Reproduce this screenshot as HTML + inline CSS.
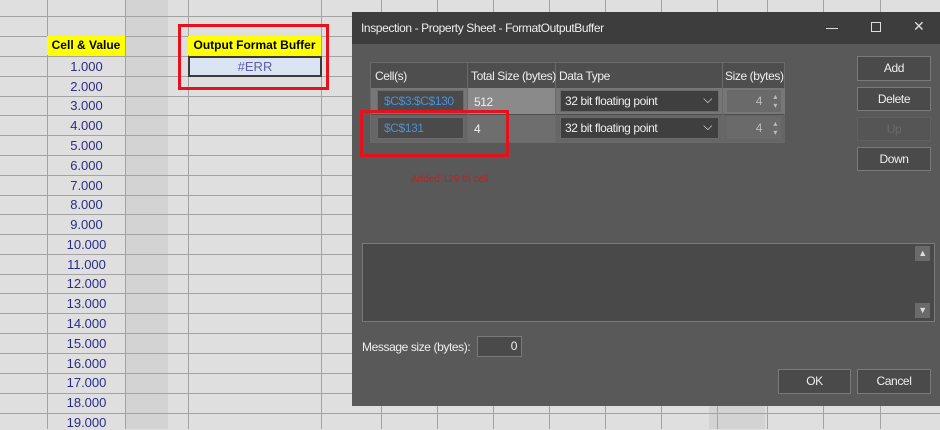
<!DOCTYPE html>
<html><head><style>
*{margin:0;padding:0;box-sizing:border-box}
body{width:940px;height:429px;overflow:hidden;position:relative;background:#dfdfdf;font-family:"Liberation Sans",sans-serif}
.a{position:absolute}
.v{position:absolute;top:0;width:1px;height:429px;background:#a3a3a3}
.h{position:absolute;left:0;width:940px;height:1px;background:#a3a3a3}
.num{position:absolute;left:48px;width:77px;text-align:center;color:#2b2b8c;font-size:13px}
.dlg{position:absolute;left:352px;top:12px;width:588px;height:394px;background:#595959;font-family:"Liberation Sans",sans-serif;color:#eee;font-size:12px;letter-spacing:-0.4px}
.btn{position:absolute;border:1px solid #7a7a7a;background:#4a4a4a;text-align:center;color:#eee;font-size:12px}
.cell{position:absolute;border:1px solid #6a6a6a}
</style></head><body>
<div class="a" style="left:125px;top:0;width:43px;height:429px;background:#d3d3d3"></div>
<div class="a" style="left:709px;top:400px;width:56px;height:29px;background:#d3d3d3"></div>
<div class="h" style="top:16px"></div><div class="h" style="top:36px"></div><div class="h" style="top:56px"></div><div class="h" style="top:76px"></div><div class="h" style="top:96px"></div><div class="h" style="top:115px"></div><div class="h" style="top:135px"></div><div class="h" style="top:155px"></div><div class="h" style="top:175px"></div><div class="h" style="top:195px"></div><div class="h" style="top:214px"></div><div class="h" style="top:234px"></div><div class="h" style="top:254px"></div><div class="h" style="top:274px"></div><div class="h" style="top:293px"></div><div class="h" style="top:313px"></div><div class="h" style="top:333px"></div><div class="h" style="top:353px"></div><div class="h" style="top:373px"></div><div class="h" style="top:393px"></div><div class="h" style="top:413px"></div>
<div class="v" style="left:47px"></div><div class="v" style="left:125px"></div><div class="v" style="left:188px"></div><div class="v" style="left:321px"></div><div class="v" style="left:381px"></div><div class="v" style="left:437px"></div><div class="v" style="left:493px"></div><div class="v" style="left:549px"></div><div class="v" style="left:605px"></div><div class="v" style="left:661px"></div><div class="v" style="left:717px"></div><div class="v" style="left:767px"></div><div class="v" style="left:823px"></div><div class="v" style="left:880px"></div>
<div class="a" style="left:47px;top:36px;width:78px;height:19px;background:#ffff00;font-weight:bold;font-size:12px;text-align:center;line-height:19px">Cell &amp; Value</div>
<div class="a" style="left:188px;top:36px;width:133px;height:19px;background:#ffff00;font-weight:bold;font-size:12px;text-align:center;line-height:19px">Output Format Buffer</div>
<div class="a" style="left:188px;top:56px;width:134px;height:21px;background:#dae4f2;border:2px solid #3a3a3a;color:#6060a8;font-size:13px;text-align:center;line-height:17px">#ERR</div>
<div class="a" style="left:178px;top:24px;width:151px;height:66px;border:3px solid #e8101c"></div>
<div class="num" style="top:59px">1.000</div><div class="num" style="top:79px">2.000</div><div class="num" style="top:98px">3.000</div><div class="num" style="top:118px">4.000</div><div class="num" style="top:138px">5.000</div><div class="num" style="top:158px">6.000</div><div class="num" style="top:178px">7.000</div><div class="num" style="top:197px">8.000</div><div class="num" style="top:217px">9.000</div><div class="num" style="top:237px">10.000</div><div class="num" style="top:257px">11.000</div><div class="num" style="top:276px">12.000</div><div class="num" style="top:296px">13.000</div><div class="num" style="top:316px">14.000</div><div class="num" style="top:336px">15.000</div><div class="num" style="top:356px">16.000</div><div class="num" style="top:375px">17.000</div><div class="num" style="top:395px">18.000</div><div class="num" style="top:415px">19.000</div>

<div class="dlg">
 <div class="a" style="left:0;top:0;width:588px;height:32px;background:#3d3d3d"></div>
 <div class="a" style="left:9px;top:9px;font-size:12px">Inspection - Property Sheet - FormatOutputBuffer</div>
 <div class="a" style="left:474px;top:16px;width:12px;height:1px;background:#ddd"></div>
 <div class="a" style="left:519px;top:10px;width:10px;height:10px;border:1px solid #ddd"></div>
 <div class="a" style="left:561px;top:6px;font-size:14px;color:#ddd">✕</div>
 <div class="a" style="left:18px;top:50px;width:415px;height:81px;background:#4e4e4e;border:1px solid #6a6a6a"></div>
 <div class="a" style="left:19px;top:76px;width:97px;height:26px;background:#777"></div>
 <div class="a" style="left:116px;top:76px;width:88px;height:26px;background:#8a8a8a"></div>
 <div class="a" style="left:204px;top:76px;width:167px;height:26px;background:#777"></div>
 <div class="a" style="left:371px;top:76px;width:62px;height:26px;background:#777"></div>
 <div class="a" style="left:19px;top:103px;width:97px;height:27px;background:#666"></div>
 <div class="a" style="left:116px;top:103px;width:88px;height:27px;background:#6e6e6e"></div>
 <div class="a" style="left:204px;top:103px;width:167px;height:27px;background:#666"></div>
 <div class="a" style="left:371px;top:103px;width:62px;height:27px;background:#666"></div>
 <div class="a" style="left:115px;top:50px;width:1px;height:81px;background:#6a6a6a"></div>
 <div class="a" style="left:203px;top:50px;width:1px;height:81px;background:#6a6a6a"></div>
 <div class="a" style="left:370px;top:50px;width:1px;height:81px;background:#6a6a6a"></div>
 <div class="a" style="left:23px;top:57px">Cell(s)</div>
 <div class="a" style="left:119px;top:57px">Total Size (bytes)</div>
 <div class="a" style="left:207px;top:57px">Data Type</div>
 <div class="a" style="left:373px;top:57px">Size (bytes)</div>
 <div class="cell" style="left:25px;top:78px;width:87px;height:22px;background:#4a4a4a;color:#4a90d8;padding:3px 6px">$C$3:$C$130</div>
 <div class="cell" style="left:25px;top:105px;width:87px;height:22px;background:#4a4a4a;color:#4a90d8;padding:3px 6px">$C$131</div>
 <div class="a" style="left:122px;top:83px">512</div>
 <div class="a" style="left:122px;top:110px">4</div>
 <div class="cell" style="left:208px;top:78px;width:159px;height:22px;background:#3f3f3f;padding:3px 4px">32 bit floating point<span style="position:absolute;right:6px;top:1px">⌵</span></div>
 <div class="cell" style="left:208px;top:105px;width:159px;height:22px;background:#3f3f3f;padding:3px 4px">32 bit floating point<span style="position:absolute;right:6px;top:1px">⌵</span></div>
 <div class="cell" style="left:375px;top:78px;width:54px;height:22px;background:#6a6a6a;color:#bbb;padding:3px 18px 0 0;text-align:right">4<span style="position:absolute;right:3px;top:1px;font-size:8px;line-height:9px">▴<br>▾</span></div>
 <div class="cell" style="left:375px;top:105px;width:54px;height:22px;background:#6a6a6a;color:#bbb;padding:3px 18px 0 0;text-align:right">4<span style="position:absolute;right:3px;top:1px;font-size:8px;line-height:9px">▴<br>▾</span></div>
 <div class="a" style="left:8px;top:98px;width:149px;height:47px;border:3px solid #e8101c"></div>
 <div class="a" style="left:59px;top:162px;color:#d01a1a;font-size:10px;letter-spacing:0">Added 129 th cell</div>
 <div class="btn" style="left:505px;top:44px;width:74px;height:25px;line-height:23px">Add</div>
 <div class="btn" style="left:505px;top:75px;width:74px;height:24px;line-height:22px">Delete</div>
 <div class="btn" style="left:505px;top:105px;width:74px;height:24px;line-height:22px;color:#6a6a6a;border-color:#606060;background:#555">Up</div>
 <div class="btn" style="left:505px;top:135px;width:74px;height:24px;line-height:22px">Down</div>
 <div class="a" style="left:10px;top:231px;width:573px;height:79px;background:#494949;border:1px solid #7a7a7a"></div>
 <div class="a" style="left:563px;top:234px;width:15px;height:15px;background:#6a6a6a;color:#ddd;font-size:9px;text-align:center;line-height:15px">▲</div>
 <div class="a" style="left:563px;top:291px;width:15px;height:15px;background:#6a6a6a;color:#ddd;font-size:9px;text-align:center;line-height:15px">▼</div>
 <div class="a" style="left:10px;top:328px">Message size (bytes):</div>
 <div class="a" style="left:125px;top:324px;width:45px;height:21px;border:1px solid #7a7a7a;background:#4a4a4a;text-align:right;padding:2px 4px">0</div>
 <div class="btn" style="left:426px;top:357px;width:73px;height:25px;line-height:23px">OK</div>
 <div class="btn" style="left:505px;top:357px;width:74px;height:25px;line-height:23px">Cancel</div>
</div>
</body></html>
